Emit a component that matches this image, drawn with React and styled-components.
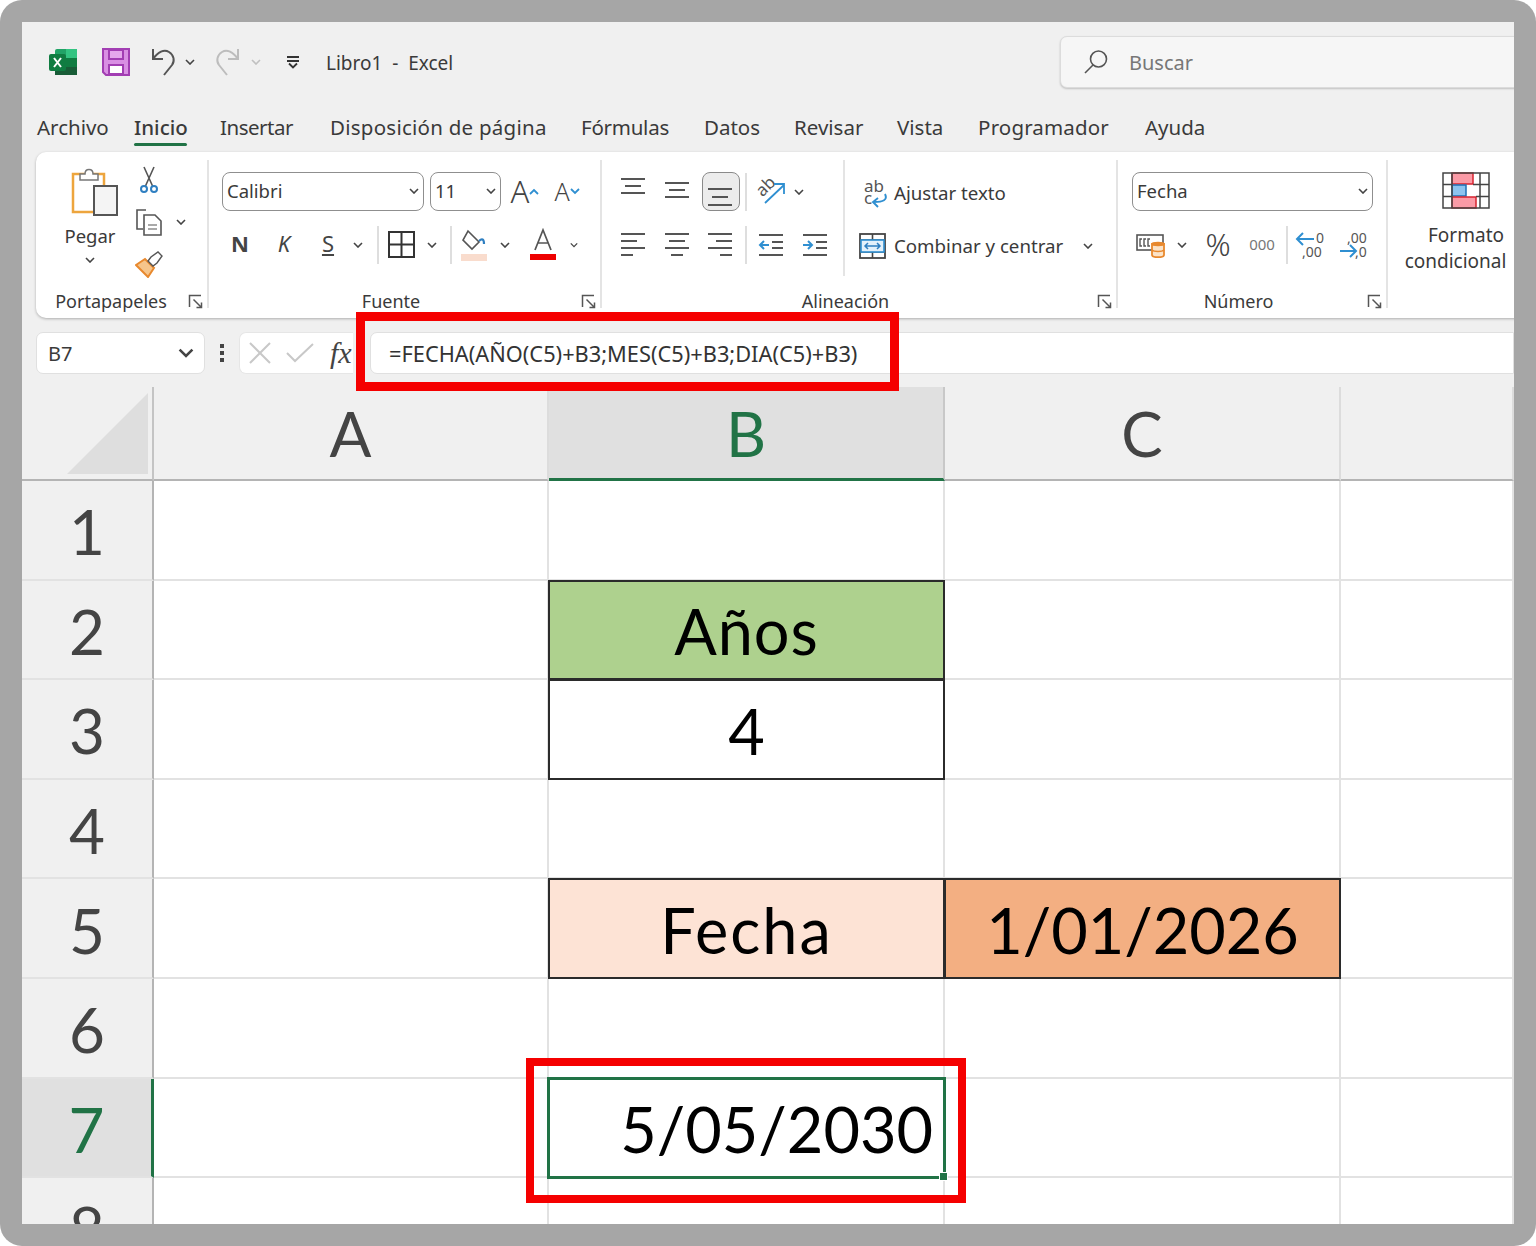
import React from "react";
import styled, { createGlobalStyle } from "styled-components";

const UI_FONT = `"Noto Sans", "Open Sans", sans-serif`;
const CELL_FONT = `Lato, "Liberation Sans", sans-serif`;
const GREEN = "#217346";

const GlobalStyle = createGlobalStyle`
  html, body {
    margin: 0;
    padding: 0;
    background: #fff;
  }
  * {
    box-sizing: border-box;
  }
`;

const Frame = styled.div`
  width: 1536px;
  height: 1246px;
  padding: 22px;
  background: #a6a6a6;
  border-radius: 22px;
`;

const ExcelWindow = styled.div`
  position: relative;
  display: flex;
  flex-direction: column;
  width: 1492px;
  height: 1202px;
  overflow: hidden;
  background: #f0f0f0;
  color: #3a3a3a;
  font-family: ${UI_FONT};
`;

/* title bar */
const TitleBar = styled.div`
  display: flex;
  align-items: center;
  flex: none;
  height: 78px;
  padding: 2px 0 0 26px;
`;

const Slot = styled.div`
  display: flex;
  align-items: center;
  justify-content: center;
  flex: none;
  width: ${(p) => p.$w}px;
`;

const DocTitle = styled.div`
  margin-left: 10px;
  padding-top: 2px;
  font-size: 19px;
  white-space: pre;
`;

const SearchBox = styled.div`
  display: flex;
  align-items: center;
  gap: 20px;
  width: 470px;
  height: 52px;
  margin-left: auto;
  margin-right: -16px;
  padding-left: 22px;
  background: #f6f6f6;
  border: 1px solid #dcdcdc;
  border-radius: 7px;
  box-shadow: 0 1px 2px rgba(0, 0, 0, 0.2);
  color: #777;
  font-size: 20px;
`;

/* tabs */
const Tabs = styled.div`
  display: flex;
  flex: none;
  height: 52px;
  padding: 11px 0 0 15px;
`;

const Tab = styled.div`
  position: relative;
  flex: none;
  width: ${(p) => p.$w}px;
  margin-left: ${(p) => p.$ml}px;
  height: 35px;
  font-size: 20.5px;
  line-height: 32px;
  letter-spacing: ${(p) => p.$spacing || 0}px;
  text-align: center;
  white-space: nowrap;
  font-weight: ${(p) => (p.$active ? 500 : 400)};

  ${(p) =>
    p.$active &&
    `&::after {
      content: "";
      position: absolute;
      left: 0;
      right: 0;
      bottom: 0;
      height: 3px;
      background: ${GREEN};
      border-radius: 2px;
    }`}
`;

/* ribbon */
const Ribbon = styled.div`
  display: flex;
  flex: none;
  width: 1500px;
  height: 166px;
  margin-left: 14px;
  background: #fff;
  border-radius: 10px 0 0 10px;
  box-shadow: 0 1px 3px rgba(0, 0, 0, 0.28);
`;

const Group = styled.div`
  display: flex;
  flex-direction: column;
  flex: none;
  width: ${(p) => p.$w}px;
`;

const GroupBody = styled.div`
  display: flex;
  flex: none;
  height: 134px;
`;

const GroupFooter = styled.div`
  display: flex;
  align-items: center;
  height: 30px;
  padding-right: 4px;
  font-size: 18px;
`;

const GroupLabel = styled.div`
  flex: 1;
  padding-right: ${(p) => (p.$pad === undefined ? 8 : p.$pad)}px;
  text-align: center;
`;

const GroupRule = styled.div`
  flex: none;
  width: 2px;
  margin: 8px 0 10px;
  background: #e4e4e4;
`;

const Rows = styled.div`
  display: flex;
  flex-direction: column;
  gap: 14px;
  flex: none;
  width: ${(p) => (p.$w ? `${p.$w}px` : "auto")};
  padding: 20px 0 0 ${(p) => p.$left || 0}px;
`;

const Row = styled.div`
  display: flex;
  align-items: center;
  height: 39px;
`;

const PasteColumn = styled.div`
  display: flex;
  flex-direction: column;
  align-items: center;
  flex: none;
  width: 96px;
  padding: 15px 0 0 12px;
  font-size: 18.5px;
`;

const PasteGraphic = styled.div`
  margin-left: 10px;
`;

const PasteText = styled.div`
  margin-bottom: 7px;
  line-height: 28px;
`;

const ClipColumn = styled.div`
  display: flex;
  flex-direction: column;
  align-items: flex-start;
  gap: 10px;
  padding: 12px 0 0;
`;

const ClipRow = styled.div`
  display: flex;
  align-items: center;
  gap: 12px;
  height: 32px;
  padding-left: 2px;
`;

const SelectBox = styled.div`
  display: flex;
  align-items: center;
  justify-content: space-between;
  flex: none;
  width: ${(p) => p.$w}px;
  height: 39px;
  margin-right: ${(p) => p.$gap || 0}px;
  padding: 0 4px 2px 4px;
  border: 1.5px solid #8f8f8f;
  border-radius: 8px;
  font-size: 18.5px;
`;

const ActiveButton = styled.div`
  display: flex;
  align-items: center;
  justify-content: center;
  flex: none;
  width: 38px;
  height: 39px;
  margin: 0 2px;
  background: #ececec;
  border: 1.5px solid #8a8a8a;
  border-radius: 8px;
`;

const Separator = styled.div`
  flex: none;
  width: 2px;
  height: 38px;
  background: #dedede;
`;

const FontButton = styled.span`
  padding-bottom: ${(p) => p.$lift || 0}px;
  font-size: ${(p) => p.$size || 22}px;
  font-weight: ${(p) => (p.$bold ? 700 : p.$light ? 300 : 400)};
  font-style: ${(p) => (p.$italic ? "italic" : "normal")};
  text-decoration: ${(p) => (p.$under ? "underline" : "none")};
  color: ${(p) => p.$color || "#444"};
  line-height: 1;
`;

const WrapRow = styled.div`
  display: flex;
  align-items: center;
  width: 100%;
  height: 39px;
  padding-top: 2px;
  font-size: 18.7px;
  white-space: nowrap;
`;

const BigButton = styled.div`
  display: flex;
  flex-direction: column;
  align-items: center;
  width: 122px;
  margin-left: 17px;
  padding-top: 20px;
  font-size: 19px;
  line-height: 26px;
  white-space: nowrap;
`;

const BigButtonText = styled.div`
  display: flex;
  align-items: center;
  gap: 11px;
`;

const BigButtonLabel = styled(BigButtonText)`
  margin-top: 13px;
`;

/* formula bar */
const FormulaBar = styled.div`
  display: flex;
  align-items: stretch;
  flex: none;
  height: 42px;
  margin: 14px 0 13px 14px;
`;

const NameBox = styled.div`
  display: flex;
  align-items: center;
  justify-content: space-between;
  width: 169px;
  padding: 0 10px 0 11px;
  background: #fff;
  border: 1.5px solid #e0e0e0;
  border-radius: 7px;
  font-size: 20px;
`;

const FormulaDots = styled.div`
  display: flex;
  align-items: center;
  justify-content: center;
  width: 34px;
`;

const FormulaTools = styled.div`
  display: flex;
  align-items: center;
  width: 114px;
  padding-left: 9px;
  background: #fff;
  border: 1.5px solid #e6e6e6;
  border-right: none;
  border-radius: 7px 0 0 7px;
  margin-right: -1px;
`;

const FxText = styled.span`
  margin-left: 1px;
  font-family: "Liberation Serif", serif;
  font-style: italic;
  font-size: 30px;
  color: #444;
`;

const FormulaInput = styled.div`
  position: relative;
  display: flex;
  align-items: center;
  flex: 1;
  padding-left: 18px;
  background: #fff;
  border: 1.5px solid #e0e0e0;
  border-radius: 7px 0 0 7px;
  font-size: 21.8px;
  color: #333;
`;

const Highlight = styled.div`
  position: absolute;
  z-index: 6;
  left: ${(p) => p.$left}px;
  top: ${(p) => p.$top}px;
  width: ${(p) => p.$w}px;
  height: ${(p) => p.$h}px;
  border: ${(p) => p.$line}px solid #f50000;
  pointer-events: none;
`;

/* sheet */
const Sheet = styled.div`
  display: grid;
  flex: 1;
  min-height: 0;
  overflow: hidden;
  grid-template-columns: 132px 395px 396px 396px 173px;
  grid-template-rows: 94px repeat(8, 99.6px);
  background: #fff;
  font-family: ${CELL_FONT};
`;

const Corner = styled.div`
  display: flex;
  align-items: flex-end;
  justify-content: flex-end;
  padding: 0 4px 5px 0;
  background: #f0f0f0;
  border-right: 2px solid #c4c4c4;
  border-bottom: 2px solid #b4b4b4;
`;

const ColHead = styled.div`
  display: flex;
  align-items: center;
  justify-content: center;
  background: ${(p) => (p.$active ? "#e0e0e0" : "#f0f0f0")};
  border-right: 2px solid ${(p) => (p.$active ? "#c8c8c8" : "#dcdcdc")};
  border-bottom: ${(p) => (p.$active ? `3px solid ${GREEN}` : "2px solid #b4b4b4")};
  color: ${(p) => (p.$active ? GREEN : "#444")};
  font-size: 62px;
`;

const RowHead = styled.div`
  display: flex;
  align-items: center;
  justify-content: center;
  padding-top: 3px;
  background: ${(p) => (p.$active ? "#e0e0e0" : "#f0f0f0")};
  border-right: ${(p) => (p.$active ? `3px solid ${GREEN}` : "2px solid #b4b4b4")};
  border-bottom: 2px solid #e2e2e2;
  color: ${(p) => (p.$active ? GREEN : "#444")};
  font-size: 62px;
`;

const Cell = styled.div`
  position: relative;
  display: flex;
  align-items: center;
  justify-content: ${(p) => (p.$right ? "flex-end" : "center")};
  padding-top: 2px;
  padding-right: ${(p) => (p.$right ? "10px" : "0")};
  background: ${(p) => p.$fill || "#fff"};
  border-right: 2px solid ${(p) => (p.$boxed ? "#222" : "#e2e2e2")};
  border-bottom: 2px solid ${(p) => (p.$boxed ? "#222" : "#e2e2e2")};
  ${(p) => p.$boxed && "border-width: 2px; border-style: solid; border-color: #2b2b2b; margin: -1px 0 0 -1px; z-index: 1;"}
  color: #000;
  font-size: 63px;
  letter-spacing: ${(p) => p.$spacing || 0}px;
`;

const Selection = styled.div`
  position: absolute;
  inset: -2px -3px -3px -2px;
  border: 3px solid ${GREEN};
  z-index: 2;
`;

const FillHandle = styled.div`
  position: absolute;
  right: -5px;
  bottom: -5px;
  width: 9px;
  height: 9px;
  background: ${GREEN};
  border: 1px solid #fff;
`;

/* icons */
const Chevron = ({ color = "#444", size = 10 }) => (
  <svg width={size} height={size * 0.6} viewBox="0 0 10 6" fill="none">
    <path d="M1 1l4 4 4-4" stroke={color} strokeWidth="1.6" />
  </svg>
);

const Launcher = () => (
  <svg width="15" height="15" viewBox="0 0 15 15" fill="none" stroke="#555" strokeWidth="1.5">
    <path d="M1.5 13V1.5H13M5.5 5.5l8 8M13.5 8.5v5h-5" />
  </svg>
);

const ExcelLogo = () => (
  <svg width="30" height="30" viewBox="0 0 30 30">
    <rect x="7" y="2" width="22" height="26" rx="2" fill="#21a366" />
    <rect x="18" y="2" width="11" height="9" fill="#33c481" />
    <rect x="7" y="11" width="11" height="9" fill="#21a366" />
    <rect x="18" y="11" width="11" height="9" fill="#107c41" />
    <rect x="7" y="20" width="22" height="8" fill="#185c37" />
    <rect x="1" y="7" width="17" height="17" rx="2" fill="#107c41" />
    <path d="M6 11l7 9M13 11l-7 9" stroke="#fff" strokeWidth="2" />
  </svg>
);

const SaveIcon = () => (
  <svg width="28" height="28" viewBox="0 0 28 28">
    <path d="M1 1h26v26H4l-3-3z" fill="#d98fe3" stroke="#a23eb3" strokeWidth="2" />
    <rect x="7" y="2" width="14" height="9" fill="#e5a8ec" stroke="#a23eb3" strokeWidth="2" />
    <rect x="7" y="17" width="14" height="9" fill="#fff" stroke="#a23eb3" strokeWidth="2" />
  </svg>
);

const UndoIcon = ({ flip, color }) => (
  <svg width="28" height="30" viewBox="0 0 28 30" fill="none" stroke={color} strokeWidth="2" style={flip ? { transform: "scaleX(-1)" } : undefined}>
    <path d="M3 2v10h10" />
    <path d="M3 12C8 5 14 2 19 5c5 3 6 9 3 13l-8 10" />
  </svg>
);

const CustomizeIcon = () => (
  <svg width="14" height="14" viewBox="0 0 14 14" fill="none" stroke="#333" strokeWidth="1.8">
    <path d="M1 2h12M1 6h12M3 8.5l4 4 4-4" />
  </svg>
);

const SearchIcon = () => (
  <svg width="26" height="26" viewBox="0 0 26 26" fill="none" stroke="#555" strokeWidth="1.6">
    <circle cx="15.5" cy="10" r="8" />
    <path d="M10 16L2 24" />
  </svg>
);

const PasteIcon = () => (
  <svg width="48" height="50" viewBox="0 0 48 50" fill="none">
    <rect x="2" y="7" width="31" height="38" fill="#fff" stroke="#eda53d" strokeWidth="2.5" />
    <path d="M9 13V7h5c0-6 8-6 8 0h5v6z" fill="#fff" stroke="#777" strokeWidth="1.5" />
    <rect x="23" y="19" width="23" height="29" fill="#f4f4f4" stroke="#555" strokeWidth="2" />
  </svg>
);

const ScissorsIcon = () => (
  <svg width="20" height="28" viewBox="0 0 20 28" fill="none">
    <path d="M5 1l9 20M15 1L6 21" stroke="#555" strokeWidth="1.6" />
    <circle cx="5" cy="23" r="3" stroke="#2f7fc1" strokeWidth="2" />
    <circle cx="15" cy="23" r="3" stroke="#2f7fc1" strokeWidth="2" />
  </svg>
);

const CopyIcon = () => (
  <svg width="28" height="28" viewBox="0 0 28 28" fill="none" stroke="#555" strokeWidth="1.6">
    <path d="M11 2H2v19h6" />
    <path d="M9 7h11l6 6v14H9z" fill="#fff" />
    <path d="M13 17h9M13 21h9" strokeWidth="1.2" />
  </svg>
);

const BrushIcon = () => (
  <svg width="28" height="28" viewBox="0 0 28 28" fill="none">
    <path d="M1 15l9-6 9 9-6 9z" fill="#f6c58b" stroke="#e8892e" strokeWidth="2" />
    <path d="M13 11l5 5 4-3 5-7-4-4-7 5z" fill="#fff" stroke="#555" strokeWidth="1.4" />
  </svg>
);

const GrowIcon = ({ down }) => (
  <svg width="10" height="7" viewBox="0 0 10 7" fill="none" stroke="#2f8fd1" strokeWidth="1.8">
    <path d={down ? "M1 1l4 4 4-4" : "M1 6l4-4 4 4"} />
  </svg>
);

const BorderIcon = () => (
  <svg width="27" height="27" viewBox="0 0 27 27" fill="none" stroke="#333" strokeWidth="2">
    <rect x="1" y="1" width="25" height="25" />
    <path d="M13.5 1v25M1 13.5h25" />
  </svg>
);

const FillIcon = () => (
  <svg width="28" height="34" viewBox="0 0 28 34" fill="none">
    <path d="M8 3l11 11-7 7-9-9z" fill="#fff" stroke="#555" strokeWidth="1.6" />
    <path d="M19 13c3-3 5-2 5 3" stroke="#2f7fc1" strokeWidth="2.2" />
    <rect x="1" y="26" width="26" height="7" fill="#f9dccd" />
  </svg>
);

const FontColorIcon = () => (
  <svg width="28" height="34" viewBox="0 0 28 34" fill="none">
    <path d="M6 22L14 2l8 20M9 15h10" stroke="#555" strokeWidth="1.7" />
    <rect x="1" y="26" width="26" height="6" fill="#ee0000" />
  </svg>
);

const Lines = ({ rows, h = 32 }) => (
  <svg width="26" height={h} viewBox={`0 0 26 ${h}`} stroke="#555" strokeWidth="2">
    {rows.map(([x1, x2, y]) => (
      <line key={y} x1={x1} x2={x2} y1={y} y2={y} />
    ))}
  </svg>
);

const IndentIcon = ({ flip }) => (
  <svg width="26" height="24" viewBox="0 0 26 24" fill="none">
    <path d="M1 2h24M14 9h11M14 15h11M1 22h24" stroke="#555" strokeWidth="2" />
    <path d={flip ? "M1 12h9M6 8l4 4-4 4" : "M11 12H2M6 8l-4 4 4 4"} stroke="#2f8fd1" strokeWidth="2" />
  </svg>
);

const OrientationIcon = () => (
  <svg width="34" height="34" viewBox="0 0 34 34" fill="none" overflow="visible">
    <text x="12" y="17" fontSize="17" textAnchor="middle" fill="#555" fontFamily="Noto Sans, sans-serif" transform="rotate(-45 12 12)">ab</text>
    <path d="M11 28L30 10M20 9h10v10" stroke="#2f8fd1" strokeWidth="1.8" />
  </svg>
);

const WrapIcon = () => (
  <svg width="28" height="36" viewBox="0 0 28 36" fill="none">
    <text x="3" y="17" fontSize="17" fill="#555" fontFamily="Noto Sans, sans-serif">ab</text>
    <text x="3" y="29" fontSize="17" fill="#555" fontFamily="Noto Sans, sans-serif">c</text>
    <path d="M24 19c3 6-2 8-11 8M17 23l-5 4 5 5" stroke="#2f8fd1" strokeWidth="1.9" />
  </svg>
);

const MergeIcon = () => (
  <svg width="27" height="26" viewBox="0 0 27 26" fill="none">
    <rect x="1" y="1" width="25" height="24" stroke="#444" strokeWidth="1.8" />
    <path d="M1 7h25M1 19h25M13.5 1v6M13.5 19v6" stroke="#444" strokeWidth="1.6" />
    <rect x="2" y="7" width="23" height="12" fill="#e3f1fb" stroke="#2f8fd1" strokeWidth="1.6" />
    <path d="M6 13h15M9 10l-3 3 3 3M18 10l3 3-3 3" stroke="#2f7fc1" strokeWidth="1.5" />
  </svg>
);

const NumberFormatIcon = () => (
  <svg width="30" height="26" viewBox="0 0 30 26" fill="none">
    <rect x="1" y="3" width="26" height="15" stroke="#555" strokeWidth="1.6" />
    <path d="M6 7h-2v7h2M10 7h-2v7h2M14 7h-2v7h2" stroke="#555" strokeWidth="1.4" />
    <path d="M16 12h12v11c0 3-12 3-12 0z" fill="#fbe3c8" stroke="#e8892e" strokeWidth="1.8" />
    <path d="M16 12c0-2 12-2 12 0s-12 2-12 0zM16 18c2 2 10 2 12 0" stroke="#e8892e" strokeWidth="1.5" />
  </svg>
);

const DecimalIcon = ({ more }) => (
  <svg width="32" height="36" viewBox="0 0 32 36" fontFamily="Noto Sans, sans-serif" fontSize="14" fill="#555">
    {more ? (
      <>
        <text x="9" y="16">,00</text>
        <text x="17" y="30">,0</text>
        <path d="M2 24h16M12 18l6 6-6 6" fill="none" stroke="#2f8fd1" strokeWidth="2" />
      </>
    ) : (
      <>
        <text x="22" y="16">0</text>
        <text x="8" y="30">,00</text>
        <path d="M20 12H3M9 6l-6 6 6 6" fill="none" stroke="#2f8fd1" strokeWidth="2" />
      </>
    )}
  </svg>
);

const CondFormatIcon = () => (
  <svg width="48" height="37" viewBox="0 0 48 37" fill="none">
    <rect x="10" y="1" width="21" height="11" fill="#fb9aa6" stroke="#d8232f" strokeWidth="1.5" />
    <rect x="10" y="13" width="14" height="11" fill="#8dc3ef" stroke="#1f6fb5" strokeWidth="1.5" />
    <rect x="10" y="25" width="24" height="11" fill="#fb9aa6" stroke="#d8232f" strokeWidth="1.5" />
    <path d="M1 1h46v35H1zM1 12.5h9M31 12.5h16M1 24.5h9M34 24.5h13M10 1v35M38 1v35" stroke="#444" strokeWidth="1.5" />
  </svg>
);

const DotsIcon = () => (
  <svg width="4" height="18" viewBox="0 0 4 18" fill="#444">
    <rect width="4" height="4" />
    <rect y="7" width="4" height="4" />
    <rect y="14" width="4" height="4" />
  </svg>
);

const CancelIcon = () => (
  <svg width="22" height="22" viewBox="0 0 22 22" stroke="#c8c8c8" strokeWidth="2">
    <path d="M1 1l20 20M21 1L1 21" />
  </svg>
);

const EnterIcon = () => (
  <svg width="28" height="20" viewBox="0 0 28 20" fill="none" stroke="#c8c8c8" strokeWidth="2">
    <path d="M1 10l8 8L27 1" />
  </svg>
);

const CornerMark = () => (
  <svg width="81" height="81" viewBox="0 0 81 81">
    <path d="M81 0v81H0z" fill="#dedede" />
  </svg>
);

const tabs = [
  { name: "Archivo", w: 71, ml: 0 },
  { name: "Inicio", w: 53, ml: 26 },
  { name: "Insertar", w: 73, ml: 33, spacing: -0.5 },
  { name: "Disposición de página", w: 216, ml: 37, spacing: 0.25 },
  { name: "Fórmulas", w: 88, ml: 35, spacing: -0.25 },
  { name: "Datos", w: 56, ml: 35 },
  { name: "Revisar", w: 69, ml: 34 },
  { name: "Vista", w: 46, ml: 34 },
  { name: "Programador", w: 131, ml: 35, spacing: 0.15 },
  { name: "Ayuda", w: 59, ml: 36 },
];

const columns = ["A", "B", "C", "D"];

const sheetCells = {
  "B2": { text: "Años", fill: "#aed18e", boxed: true, spacing: 1 },
  "B3": { text: "4", boxed: true },
  "B5": { text: "Fecha", fill: "#fde3d5", boxed: true, spacing: 2 },
  "C5": { text: "1/01/2026", fill: "#f3af82", boxed: true },
  "B7": { text: "5/05/2030", right: true, selected: true },
};

const App = () => {
  return (
    <>
      <GlobalStyle />
      <Frame>
        <ExcelWindow>
          <TitleBar>
            <Slot $w={30}><ExcelLogo /></Slot>
            <Slot $w={24} />
            <Slot $w={28}><SaveIcon /></Slot>
            <Slot $w={20} />
            <Slot $w={28}><UndoIcon color="#555" /></Slot>
            <Slot $w={24}><Chevron /></Slot>
            <Slot $w={11} />
            <Slot $w={28}><UndoIcon flip color="#bdbdbd" /></Slot>
            <Slot $w={29}><Chevron color="#c0c0c0" /></Slot>
            <Slot $w={46}><CustomizeIcon /></Slot>
            <DocTitle>Libro1  -  Excel</DocTitle>
            <SearchBox>
              <SearchIcon />
              Buscar
            </SearchBox>
          </TitleBar>

          <Tabs>
            {tabs.map((tab) => (
              <Tab key={tab.name} $w={tab.w} $ml={tab.ml} $spacing={tab.spacing} $active={tab.name === "Inicio"}>{tab.name}</Tab>
            ))}
          </Tabs>

          <Ribbon>
            <Group $w={171}>
              <GroupBody>
                <PasteColumn>
                  <PasteGraphic><PasteIcon /></PasteGraphic>
                  <PasteText>Pegar</PasteText>
                  <Chevron />
                </PasteColumn>
                <ClipColumn>
                  <ClipRow><Slot $w={30}><ScissorsIcon /></Slot></ClipRow>
                  <ClipRow><Slot $w={30}><CopyIcon /></Slot><Chevron /></ClipRow>
                  <ClipRow><Slot $w={30}><BrushIcon /></Slot></ClipRow>
                </ClipColumn>
              </GroupBody>
              <GroupFooter>
                <GroupLabel $pad={2}>Portapapeles</GroupLabel>
                <Launcher />
              </GroupFooter>
            </Group>
            <GroupRule />

            <Group $w={391}>
              <GroupBody>
                <Rows $left={13}>
                  <Row>
                    <SelectBox $w={202} $gap={6}>Calibri <Chevron /></SelectBox>
                    <SelectBox $w={71}>11 <Chevron /></SelectBox>
                    <Slot $w={48}>
                      <FontButton $size={31} $light>A</FontButton>
                      <GrowIcon />
                    </Slot>
                    <Slot $w={36}>
                      <FontButton $size={25} $light>A</FontButton>
                      <GrowIcon down />
                    </Slot>
                  </Row>
                  <Row>
                    <Slot $w={36}><FontButton $bold $lift={3}>N</FontButton></Slot>
                    <Slot $w={52}><FontButton $italic $lift={3}>K</FontButton></Slot>
                    <Slot $w={36}><FontButton $under $lift={3}>S</FontButton></Slot>
                    <Slot $w={24}><Chevron /></Slot>
                    <Slot $w={16}><Separator /></Slot>
                    <Slot $w={30}><BorderIcon /></Slot>
                    <Slot $w={32}><Chevron /></Slot>
                    <Slot $w={6}><Separator /></Slot>
                    <Slot $w={40}><FillIcon /></Slot>
                    <Slot $w={22}><Chevron /></Slot>
                    <Slot $w={54}><FontColorIcon /></Slot>
                    <Slot $w={8}><Chevron /></Slot>
                  </Row>
                </Rows>
              </GroupBody>
              <GroupFooter>
                <GroupLabel>Fuente</GroupLabel>
                <Launcher />
              </GroupFooter>
            </Group>
            <GroupRule />

            <Group $w={514}>
              <GroupBody>
                <Rows $w={241} $left={10}>
                  <Row>
                    <Slot $w={44}><Lines rows={[[0, 24, 3], [4, 20, 10], [0, 24, 17]]} /></Slot>
                    <Slot $w={44}><Lines rows={[[0, 24, 7], [4, 20, 14], [0, 24, 21]]} /></Slot>
                    <ActiveButton><Lines rows={[[0, 24, 13], [4, 20, 21], [0, 24, 29]]} /></ActiveButton>
                    <Slot $w={8}><Separator /></Slot>
                    <Slot $w={42}><OrientationIcon /></Slot>
                    <Slot $w={14}><Chevron /></Slot>
                  </Row>
                  <Row>
                    <Slot $w={44}><Lines h={24} rows={[[0, 24, 1], [0, 16, 8], [0, 24, 15], [0, 12, 22]]} /></Slot>
                    <Slot $w={44}><Lines h={24} rows={[[0, 24, 1], [4, 20, 8], [0, 24, 15], [6, 18, 22]]} /></Slot>
                    <Slot $w={42}><Lines h={24} rows={[[0, 24, 1], [8, 24, 8], [0, 24, 15], [12, 24, 22]]} /></Slot>
                    <Slot $w={8}><Separator /></Slot>
                    <Slot $w={42}><IndentIcon /></Slot>
                    <Slot $w={46}><IndentIcon flip /></Slot>
                  </Row>
                </Rows>
                <GroupRule />
                <Rows $left={11}>
                  <WrapRow>
                    <Slot $w={38}><WrapIcon /></Slot>
                    Ajustar texto
                  </WrapRow>
                  <WrapRow>
                    <Slot $w={32}><MergeIcon /></Slot>
                    <Slot $w={6} />
                    Combinar y centrar
                    <Slot $w={50}><Chevron /></Slot>
                  </WrapRow>
                </Rows>
              </GroupBody>
              <GroupFooter>
                <GroupLabel>Alineación</GroupLabel>
                <Launcher />
              </GroupFooter>
            </Group>
            <GroupRule />

            <Group $w={268}>
              <GroupBody>
                <Rows $left={14}>
                  <Row>
                    <SelectBox $w={241}>Fecha <Chevron /></SelectBox>
                  </Row>
                  <Row>
                    <Slot $w={38}><NumberFormatIcon /></Slot>
                    <Slot $w={24}><Chevron /></Slot>
                    <Slot $w={48}><FontButton $size={31} $light>%</FontButton></Slot>
                    <Slot $w={40}><FontButton $size={15} $color="#777">000</FontButton></Slot>
                    <Slot $w={10}><Separator /></Slot>
                    <Slot $w={36}><DecimalIcon /></Slot>
                    <Slot $w={52}><DecimalIcon more /></Slot>
                  </Row>
                </Rows>
              </GroupBody>
              <GroupFooter>
                <GroupLabel>Número</GroupLabel>
                <Launcher />
              </GroupFooter>
            </Group>
            <GroupRule />

            <BigButton>
              <CondFormatIcon />
              <BigButtonLabel>Formato</BigButtonLabel>
              <BigButtonText>condicional <Chevron /></BigButtonText>
            </BigButton>
          </Ribbon>

          <FormulaBar>
            <NameBox>B7 <Chevron size={16} /></NameBox>
            <FormulaDots><DotsIcon /></FormulaDots>
            <FormulaTools>
              <CancelIcon />
              <Slot $w={58}><EnterIcon /></Slot>
              <FxText>fx</FxText>
            </FormulaTools>
            <Slot $w={18} />
            <FormulaInput>
              =FECHA(AÑO(C5)+B3;MES(C5)+B3;DIA(C5)+B3)
              <Highlight $left={-15} $top={-21} $w={543} $h={79} $line={9} />
            </FormulaInput>
          </FormulaBar>

          <Sheet>
            <Corner><CornerMark /></Corner>
            {columns.map((col) => (
              <ColHead key={col} $active={col === "B"}>{col === "D" ? "" : col}</ColHead>
            ))}
            {[1, 2, 3, 4, 5, 6, 7, 8].map((row) => (
              <React.Fragment key={row}>
                <RowHead $active={row === 7}>{row}</RowHead>
                {columns.map((col) => {
                  const cell = sheetCells[`${col}${row}`] || {};
                  return (
                    <Cell key={col} $fill={cell.fill} $boxed={cell.boxed} $right={cell.right} $spacing={cell.spacing}>
                      {cell.text}
                      {cell.selected && (
                        <>
                          <Selection><FillHandle /></Selection>
                          <Highlight $left={-23} $top={-21} $w={440} $h={145} $line={8} />
                        </>
                      )}
                    </Cell>
                  );
                })}
              </React.Fragment>
            ))}
          </Sheet>
        </ExcelWindow>
      </Frame>
    </>
  );
};

export default App;
